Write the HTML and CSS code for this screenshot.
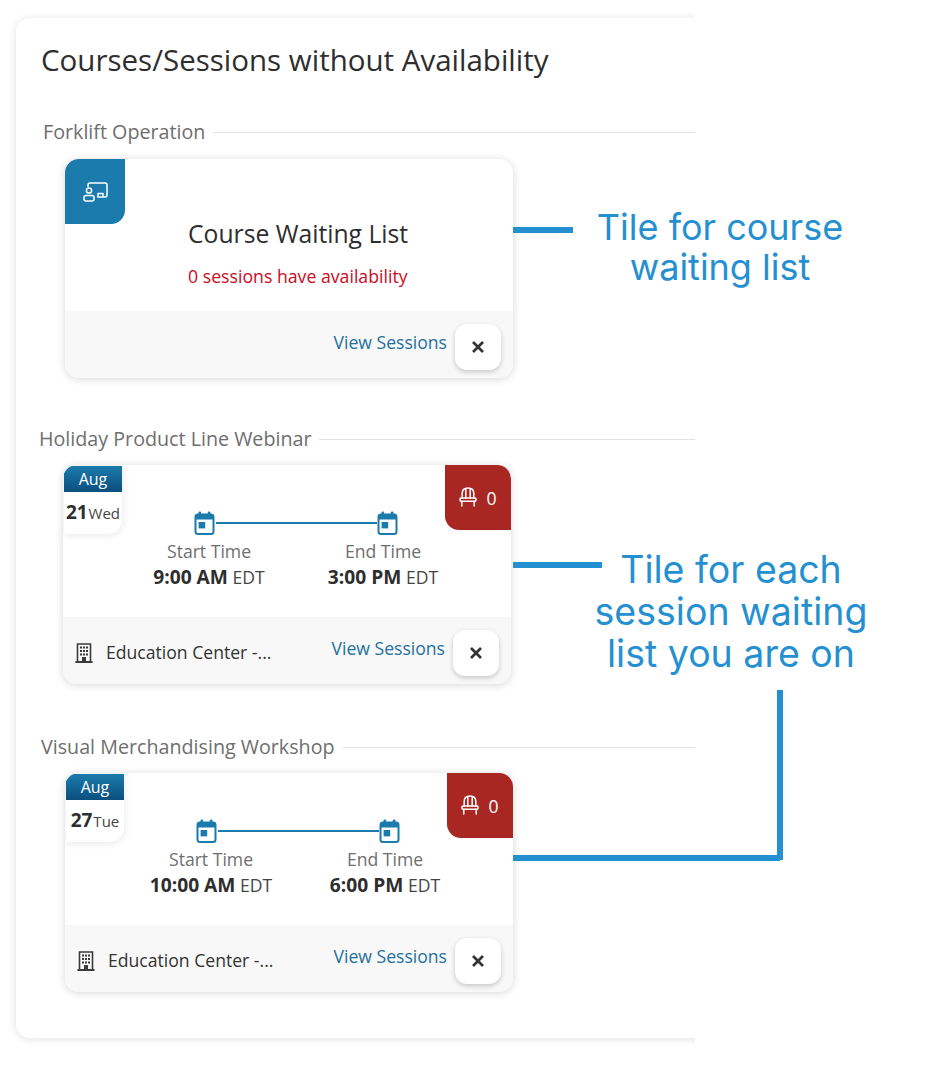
FILE: index.html
```html
<!DOCTYPE html>
<html lang="en">
<head>
    <meta charset="UTF-8">
    <meta name="viewport" content="width=device-width, initial-scale=1.0">
    <title>Courses/Sessions without Availability</title>
    <link rel="stylesheet" href="styles.css">
</head>
<body>
    <svg class="icon-defs" width="0" height="0" aria-hidden="true">
        <symbol id="icon-calendar" viewBox="0 0 22 24">
            <rect x="1.5" y="3.5" width="18" height="19.5" rx="2.5" fill="none" stroke="currentColor" stroke-width="2"/>
            <rect x="1.5" y="3.5" width="18" height="5" fill="currentColor"/>
            <rect x="4.5" y="0.5" width="2.6" height="5" rx="1" fill="currentColor"/>
            <rect x="13.8" y="0.5" width="2.6" height="5" rx="1" fill="currentColor"/>
            <rect x="4.6" y="11" width="6.6" height="6.4" fill="currentColor"/>
        </symbol>
        <symbol id="icon-seat" viewBox="0 0 18 20">
            <g fill="none" stroke="currentColor" stroke-width="1.5" stroke-linecap="round" stroke-linejoin="round">
                <path d="M3.2 11V6.5C3.2 3 5.6 1 9 1s5.8 2 5.8 5.5V11"/>
                <path d="M6.8 2v9M11.2 2v9"/>
                <rect x="1" y="11" width="16" height="3.2" rx="1"/>
                <path d="M2.8 14.2V19M15.2 14.2V19"/>
            </g>
        </symbol>
        <symbol id="icon-building" viewBox="0 0 18 20">
            <path d="M2.5 19V1h13v18" fill="none" stroke="currentColor" stroke-width="1.6"/>
            <rect x="0.5" y="18" width="17" height="2" fill="currentColor"/>
            <g fill="currentColor">
                <rect x="5" y="3.5" width="2" height="2"/><rect x="8" y="3.5" width="2" height="2"/><rect x="11" y="3.5" width="2" height="2"/>
                <rect x="5" y="7" width="2" height="2"/><rect x="8" y="7" width="2" height="2"/><rect x="11" y="7" width="2" height="2"/>
                <rect x="5" y="10.5" width="2" height="2"/><rect x="8" y="10.5" width="2" height="2"/><rect x="11" y="10.5" width="2" height="2"/>
                <rect x="7" y="14" width="4" height="4"/>
            </g>
        </symbol>
        <symbol id="icon-close" viewBox="0 0 14 14">
            <path d="M2 2l10 10M12 2L2 12" fill="none" stroke="currentColor" stroke-width="2.7"/>
        </symbol>
    </svg>

    <div class="clip">
        <div class="panel">
            <h2 class="panel-title">Courses/Sessions without Availability</h2>

            <section class="group group-first">
                <div class="group-title"><span>Forklift Operation</span></div>
                <div class="tile">
                    <div class="tile-body">
                        <div class="course-flag">
                            <svg class="course-icon" viewBox="0 0 25 20" fill="none" stroke="currentColor" stroke-width="1.5" stroke-linejoin="round">
                                <path d="M5 5V3a2 2 0 0 1 2-2h15a2 2 0 0 1 2 2v10a2 2 0 0 1-2 2h-8"/>
                                <path d="M15 14.5v-3h5v3"/>
                                <circle cx="6" cy="8.5" r="2.6"/>
                                <rect x="1" y="13.5" width="10" height="5.5" rx="2"/>
                            </svg>
                        </div>
                        <div class="course-info">
                            <div class="course-name">Course Waiting List</div>
                            <div class="course-note">0 sessions have availability</div>
                        </div>
                    </div>
                    <div class="tile-foot">
                        <a class="view-link" href="#">View Sessions</a>
                        <button class="close-btn" type="button"><svg><use href="#icon-close"/></svg></button>
                    </div>
                </div>
            </section>

            <section class="group group-second">
                <div class="group-title"><span>Holiday Product Line Webinar</span></div>
                <div class="tile">
                    <div class="tile-body">
                        <div class="date-flag">
                            <div class="date-month">Aug</div>
                            <div class="date-day"><b>21</b> Wed</div>
                        </div>
                        <div class="seats"><svg><use href="#icon-seat"/></svg> 0</div>
                        <div class="timeline">
                            <svg class="cal"><use href="#icon-calendar"/></svg>
                            <span class="timeline-line"></span>
                            <svg class="cal"><use href="#icon-calendar"/></svg>
                        </div>
                        <div class="times">
                            <div>
                                <div class="time-label">Start Time</div>
                                <div class="time-value"><b>9:00 AM</b> EDT</div>
                            </div>
                            <div>
                                <div class="time-label">End Time</div>
                                <div class="time-value"><b>3:00 PM</b> EDT</div>
                            </div>
                        </div>
                    </div>
                    <div class="tile-foot">
                        <svg class="building"><use href="#icon-building"/></svg>
                        <span class="location">Education Center -...</span>
                        <a class="view-link" href="#">View Sessions</a>
                        <button class="close-btn" type="button"><svg><use href="#icon-close"/></svg></button>
                    </div>
                </div>
            </section>

            <section class="group group-third">
                <div class="group-title"><span>Visual Merchandising Workshop</span></div>
                <div class="tile">
                    <div class="tile-body">
                        <div class="date-flag">
                            <div class="date-month">Aug</div>
                            <div class="date-day"><b>27</b> Tue</div>
                        </div>
                        <div class="seats"><svg><use href="#icon-seat"/></svg> 0</div>
                        <div class="timeline">
                            <svg class="cal"><use href="#icon-calendar"/></svg>
                            <span class="timeline-line"></span>
                            <svg class="cal"><use href="#icon-calendar"/></svg>
                        </div>
                        <div class="times">
                            <div>
                                <div class="time-label">Start Time</div>
                                <div class="time-value"><b>10:00 AM</b> EDT</div>
                            </div>
                            <div>
                                <div class="time-label">End Time</div>
                                <div class="time-value"><b>6:00 PM</b> EDT</div>
                            </div>
                        </div>
                    </div>
                    <div class="tile-foot">
                        <svg class="building"><use href="#icon-building"/></svg>
                        <span class="location">Education Center -...</span>
                        <a class="view-link" href="#">View Sessions</a>
                        <button class="close-btn" type="button"><svg><use href="#icon-close"/></svg></button>
                    </div>
                </div>
            </section>
        </div>
    </div>

    <!-- callouts drawn on top of the screenshot -->
    <div class="note note-course">Tile for course<br>waiting list</div>
    <div class="note note-session">Tile for each<br>session waiting<br>list you are on</div>
    <span class="rule rule-course"></span>
    <span class="rule rule-session"></span>
    <span class="rule rule-down"></span>
    <span class="rule rule-across"></span>
</body>
</html>
```

FILE: styles.css
```css
html, body {
    margin: 0;
    background: #fff;
}
body {
    position: relative;
    width: 931px;
    height: 1065px;
    overflow: hidden;
    font-family: "Open Sans", Arial, sans-serif;
    color: #2e2e2e;
}
.icon-defs {
    display: block;
    height: 0;
}
.clip {
    width: 695px;
    height: 1065px;
    overflow: hidden;
    padding-top: 18px;
    box-sizing: border-box;
}
.panel {
    width: 720px;
    height: 1020px;
    margin-left: 16px;
    box-sizing: border-box;
    background: #fff;
    border-radius: 14px;
    box-shadow: 0 1px 8px rgba(0, 0, 0, 0.12);
    padding-top: 20px;
}
.panel-title {
    margin: 0 0 0 25px;
    font-size: 29.5px;
    line-height: 44px;
    font-weight: 400;
}

/* course groups, each sits a little off from the next in the reference */
.group-first {
    margin: 37px 0 0 27px;
}
.group-second {
    margin: 48px 0 0 23px;
}
.group-third {
    margin: 50px 0 0 25px;
}
.group-title {
    display: flex;
    align-items: center;
    gap: 8px;
    font-size: 19.7px;
    line-height: 26px;
    color: #6e6e6e;
}
.group-title::after {
    content: "";
    flex: 1;
    height: 1px;
    background: #e2e2e2;
}
.tile {
    width: 448px;
    height: 219px;
    margin: 14px 0 0 22px;
    border-radius: 14px;
    background: #fff;
    box-shadow: 0 1px 8px rgba(0, 0, 0, 0.16);
    display: flex;
    flex-direction: column;
    overflow: hidden;
}
.group-second .tile {
    margin-left: 24px;
    margin-top: 13px;
}
.group-third .tile {
    margin-left: 24px;
    margin-top: 13px;
}
.tile-body {
    position: relative;
    height: 152px;
}
.tile-foot {
    height: 67px;
    box-sizing: border-box;
    background: #f8f8f8;
    display: flex;
    align-items: flex-start;
    padding: 13px 12px 8px;
}

/* course tile */
.course-flag {
    position: absolute;
    left: 0;
    top: 0;
    width: 60px;
    height: 65px;
    background: #1b7bac;
    border-bottom-right-radius: 14px;
    color: #fff;
    display: flex;
    align-items: center;
    justify-content: center;
}
.course-icon {
    width: 25px;
    height: 20px;
}
.course-info {
    padding: 59px 0 0 123px;
}
.course-name {
    font-size: 24.7px;
    line-height: 32px;
}
.course-note {
    margin-top: 14px;
    font-size: 17.7px;
    line-height: 24px;
    color: #cc0a22;
}

/* session tile */
.date-flag {
    position: absolute;
    left: 1px;
    top: 1px;
    width: 58px;
    height: 68px;
    background: #fff;
    border-bottom-right-radius: 14px;
    box-shadow: 0 1px 8px rgba(0, 0, 0, 0.1);
    overflow: hidden;
}
.date-month {
    height: 26px;
    line-height: 26px;
    text-align: center;
    font-size: 16px;
    color: #fff;
    background: linear-gradient(#1b7bac, #0a4f7e);
}
.date-day {
    text-align: center;
    font-size: 15px;
    line-height: 40px;
    color: #444;
    white-space: nowrap;
    word-spacing: -3px;
}
.date-day b {
    font-size: 19px;
    color: #2e2e2e;
}
.seats {
    position: absolute;
    right: 0;
    top: 0;
    width: 66px;
    height: 65px;
    box-sizing: border-box;
    background: #a92722;
    border-bottom-left-radius: 14px;
    color: #fff;
    font-size: 17.6px;
    display: flex;
    align-items: center;
    justify-content: center;
    gap: 9px;
}
.seats svg {
    width: 18px;
    height: 20px;
    margin-top: -2px;
}
.timeline {
    display: flex;
    align-items: center;
    width: 205px;
    margin-left: 131px;
    padding-top: 46px;
    color: #1b7bac;
}
.cal {
    width: 22px;
    height: 24px;
    flex: none;
}
.timeline-line {
    flex: 1;
    height: 2px;
    background: #1b7bac;
}
.times {
    display: grid;
    grid-template-columns: 174px 174px;
    margin-left: 59px;
    text-align: center;
    margin-top: 4px;
}
.time-label {
    font-size: 17.6px;
    line-height: 25px;
    color: #6e6e6e;
}
.time-value {
    font-size: 17.6px;
    line-height: 26px;
    color: #444;
    white-space: nowrap;
}
.time-value b {
    font-size: 19.2px;
    color: #2e2e2e;
}

/* tile footer */
.building {
    width: 18px;
    height: 20px;
    flex: none;
    color: #3a3a3a;
    margin-top: 13px;
}
.location {
    margin-left: 13px;
    font-size: 17.6px;
    line-height: 44px;
    color: #333;
    white-space: nowrap;
}
.view-link {
    margin-left: auto;
    font-size: 17.6px;
    line-height: 37px;
    color: #23709f;
    text-decoration: none;
    white-space: nowrap;
}
.close-btn {
    width: 46px;
    height: 46px;
    margin-left: 8px;
    flex: none;
    padding: 0;
    border: 0;
    border-radius: 12px;
    background: #fff;
    box-shadow: 0 2px 5px rgba(0, 0, 0, 0.2);
    color: #333;
    display: flex;
    align-items: center;
    justify-content: center;
}
.close-btn svg {
    width: 14px;
    height: 14px;
}

/* callouts */
.note {
    position: absolute;
    font-family: Inter, "Open Sans", sans-serif;
    color: #2590d1;
    text-align: center;
    white-space: nowrap;
    transform: translateX(-50%);
}
.note-course {
    left: 720px;
    top: 207px;
    font-size: 36px;
    line-height: 40px;
}
.note-session {
    left: 731px;
    top: 549px;
    font-size: 37.5px;
    line-height: 42px;
}
.rule {
    position: absolute;
    background: #2590d1;
}
.rule-course {
    left: 513px;
    top: 227px;
    width: 60px;
    height: 6px;
}
.rule-session {
    left: 513px;
    top: 562px;
    width: 89px;
    height: 6px;
}
.rule-down {
    left: 777px;
    top: 690px;
    width: 6px;
    height: 170px;
}
.rule-across {
    left: 513px;
    top: 855px;
    width: 267px;
    height: 6px;
}
```
